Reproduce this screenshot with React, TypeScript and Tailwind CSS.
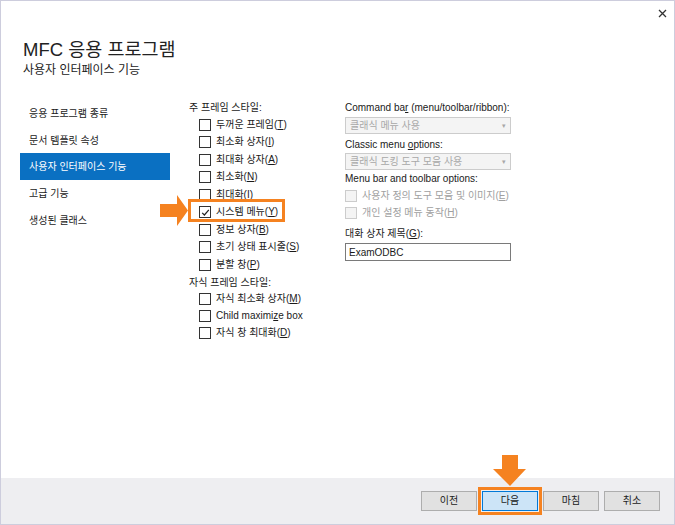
import type { ReactNode } from "react";

const navItems = [
  "응용 프로그램 종류",
  "문서 템플릿 속성",
  "사용자 인터페이스 기능",
  "고급 기능",
  "생성된 클래스",
];

const mainStyles: { label: string; key: string; checked?: boolean }[] = [
  { label: "두꺼운 프레임", key: "T" },
  { label: "최소화 상자", key: "I" },
  { label: "최대화 상자", key: "A" },
  { label: "최소화", key: "N" },
  { label: "최대화", key: "I" },
  { label: "시스템 메뉴", key: "Y", checked: true },
  { label: "정보 상자", key: "B" },
  { label: "초기 상태 표시줄", key: "S" },
  { label: "분할 창", key: "P" },
];

function Mnemonic({ label, k }: { label: string; k: string }) {
  return (
    <>
      {label}(<u className="underline-offset-1">{k}</u>)
    </>
  );
}

function CheckBox({ checked, disabled }: { checked?: boolean; disabled?: boolean }) {
  return (
    <span
      className={
        disabled
          ? "w-[12px] h-[12px] shrink-0 border border-[#cccccc] bg-[#f4f4f4]"
          : "w-[12px] h-[12px] shrink-0 border border-[#333333] bg-white flex items-center justify-center"
      }
    >
      {checked && (
        <svg width="9" height="9" viewBox="0 0 9 9">
          <path d="M1.2 4.8 L3.4 7 L7.8 1.8" fill="none" stroke="#222" strokeWidth="1.2" />
        </svg>
      )}
    </span>
  );
}

function Row({ children, checked, className = "h-[17.5px]" }: { children: ReactNode; checked?: boolean; className?: string }) {
  return (
    <div className={`relative flex items-center gap-[5px] pl-[10px] ${className}`}>
      <CheckBox checked={checked} />
      <span className="leading-[14px] whitespace-nowrap">{children}</span>
      {checked && (
        <span className="absolute left-[-1px] top-[-4.5px] w-[97px] h-[23px] border-[3px] border-[#f58220]" />
      )}
    </div>
  );
}

function Combo({ text }: { text: string }) {
  return (
    <div className="h-[17px] border border-[#cccccc] bg-[#f4f4f4] flex items-center justify-between pl-[4px] pr-[4px] text-[#a8a8a8]">
      <span className="leading-[14px]">{text}</span>
      <span className="text-[7px] leading-none">▾</span>
    </div>
  );
}

function FooterButton({ children, primary }: { children: ReactNode; primary?: boolean }) {
  return (
    <button
      type="button"
      className={
        primary
          ? "w-[56px] h-[20px] border border-[#0078d7] bg-[#cce4f7] leading-[16px] outline-[3px] outline-solid outline-[#f58220] outline-offset-[1px]"
          : "w-[56px] h-[20px] border border-[#adadad] bg-[#e1e1e1] leading-[16px]"
      }
    >
      {children}
    </button>
  );
}

export default function App() {
  return (
    <div className="relative w-[675px] h-[525px] border border-[#cdcddd] bg-white flex flex-col text-[10px] text-[#1a1a1a] font-['Liberation_Sans','Noto_Sans_CJK_KR',sans-serif]">
      <div className="flex-1 flex flex-col">
        <div className="h-[24px] flex items-center justify-end pr-[7px]">
          <svg width="9" height="9" viewBox="0 0 9 9">
            <path d="M1 1 L8 8 M8 1 L1 8" stroke="#333" strokeWidth="1.3" />
          </svg>
        </div>

        <div className="pl-[22px] mt-[13px]">
          <h1 className="text-[18.5px] leading-[24px] text-[#222]">MFC 응용 프로그램</h1>
          <p className="text-[12px] leading-[16px] text-[#222]">사용자 인터페이스 기능</p>
        </div>

        <div className="flex mt-[22px]">
          <nav className="ml-[19px] w-[150px] flex flex-col">
            {navItems.map((item, i) => (
              <div
                key={item}
                className={
                  i === 2
                    ? "h-[26.7px] flex items-center pl-[9px] bg-[#0a70c2] text-white"
                    : "h-[26.7px] flex items-center pl-[9px]"
                }
              >
                {item}
              </div>
            ))}
          </nav>

          <div className="ml-[19px] w-[156px] flex flex-col">
            <div className="mt-[1px] h-[15px] leading-[13px]">주 프레임 스타일:</div>
            {mainStyles.map((s) => (
              <Row key={s.label} checked={s.checked}>
                <Mnemonic label={s.label} k={s.key} />
              </Row>
            ))}
            <div className="h-[17px] pt-[1px] leading-[15px]">자식 프레임 스타일:</div>
            <Row className="h-[17px]">
              <Mnemonic label="자식 최소화 상자" k="M" />
            </Row>
            <Row className="h-[17px]">
              Child maximi<u>z</u>e box
            </Row>
            <Row className="h-[17px]">
              <Mnemonic label="자식 창 최대화" k="D" />
            </Row>
          </div>

          <div className="w-[166px] flex flex-col">
            <div className="h-[16px] leading-[16px] whitespace-nowrap">
              Command ba<u>r</u> (menu/toolbar/ribbon):
            </div>
            <div className="mt-[1px]">
              <Combo text="클래식 메뉴 사용" />
            </div>
            <div className="h-[19px] pt-[2px] leading-[17px] whitespace-nowrap">
              Classic menu <u>o</u>ptions:
            </div>
            <Combo text="클래식 도킹 도구 모음 사용" />
            <div className="h-[17px] flex items-center">Menu bar and toolbar options:</div>
            <div className="h-[17px] flex items-center gap-[5px] text-[#a0a0a0]">
              <CheckBox disabled />
              <span className="whitespace-nowrap">
                <Mnemonic label="사용자 정의 도구 모음 및 이미지" k="E" />
              </span>
            </div>
            <div className="h-[17px] flex items-center gap-[5px] text-[#a0a0a0]">
              <CheckBox disabled />
              <span className="whitespace-nowrap">
                <Mnemonic label="개인 설정 메뉴 동작" k="H" />
              </span>
            </div>
            <div className="h-[22px] pt-[5px] leading-[16px]">
              <Mnemonic label="대화 상자 제목" k="G" />:
            </div>
            <div className="h-[18px] border border-[#7a7a7a] bg-white flex items-center pl-[3px]">
              ExamODBC
            </div>
          </div>
        </div>
      </div>

      <footer className="h-[46px] bg-[#eeeef1] flex items-center justify-end gap-[5px] pr-[14px]">
        <FooterButton>이전</FooterButton>
        <FooterButton primary>다음</FooterButton>
        <FooterButton>마침</FooterButton>
        <FooterButton>취소</FooterButton>
      </footer>

      <svg className="absolute left-[159px] top-[193px]" width="29" height="33" viewBox="0 0 29 33">
        <path d="M0 10 H17 V1 L28 16.5 L17 32 V23 H0 Z" fill="#f58220" />
      </svg>
      <svg className="absolute left-[492px] top-[454px]" width="33" height="31" viewBox="0 0 33 31">
        <path d="M9 0 H25 V14 H33 L17 31 L0 14 H9 Z" fill="#f58220" />
      </svg>
    </div>
  );
}
